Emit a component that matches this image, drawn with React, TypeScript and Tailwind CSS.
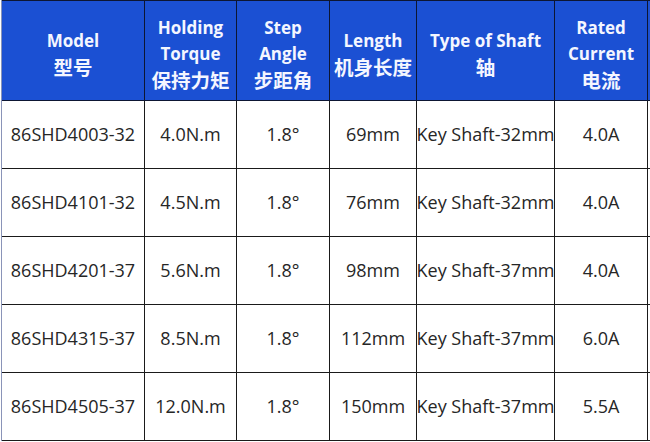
const headers = [
  { w: "w-[143px]", lines: ["Model"], cn: "型号" },
  { w: "w-[92px]", lines: ["Holding", "Torque"], cn: "保持力矩" },
  { w: "w-[93px]", lines: ["Step", "Angle"], cn: "步距角" },
  { w: "w-[87px]", lines: ["Length"], cn: "机身长度" },
  { w: "w-[138px]", lines: ["Type of Shaft"], cn: "轴" },
  { w: "w-[93px]", lines: ["Rated", "Current"], cn: "电流" },
];

const rows = [
  ["86SHD4003-32", "4.0N.m", "1.8°", "69mm", "Key Shaft-32mm", "4.0A"],
  ["86SHD4101-32", "4.5N.m", "1.8°", "76mm", "Key Shaft-32mm", "4.0A"],
  ["86SHD4201-37", "5.6N.m", "1.8°", "98mm", "Key Shaft-37mm", "4.0A"],
  ["86SHD4315-37", "8.5N.m", "1.8°", "112mm", "Key Shaft-37mm", "6.0A"],
  ["86SHD4505-37", "12.0N.m", "1.8°", "150mm", "Key Shaft-37mm", "5.5A"],
];

export default function App() {
  return (
    <div
      className="w-[650px] h-[442px] overflow-hidden bg-white pl-px"
      style={{ fontFamily: '"Open Sans", "Noto Sans CJK SC", sans-serif' }}
    >
      <div className="border-l border-[#8a94b8]">
        <div className="flex h-[101px] border-t border-b border-[#0d1633] bg-[#1b50d3] text-[#f4f6ff] font-bold text-[17px] leading-[26px]">
          {headers.map((h) => (
            <div
              key={h.cn}
              className={`${h.w} shrink-0 border-r border-[#0d1633] flex flex-col items-center justify-center pt-[8px]`}
            >
              {h.lines.map((l) => (
                <div key={l} className="whitespace-nowrap">{l}</div>
              ))}
              <div className="text-[19.5px] leading-[27px] whitespace-nowrap">{h.cn}</div>
            </div>
          ))}
          <div className="flex-1" />
        </div>
        {rows.map((r) => (
          <div key={r[0]} className="flex h-[68px] border-b border-[#1a1a1a] text-[18px] text-[#262626]">
            {r.map((c, i) => (
              <div
                key={i}
                className={`${headers[i].w} shrink-0 border-r border-[#1a1a1a] flex items-center justify-center whitespace-nowrap overflow-hidden`}
              >
                {c}
              </div>
            ))}
          </div>
        ))}
      </div>
    </div>
  );
}
